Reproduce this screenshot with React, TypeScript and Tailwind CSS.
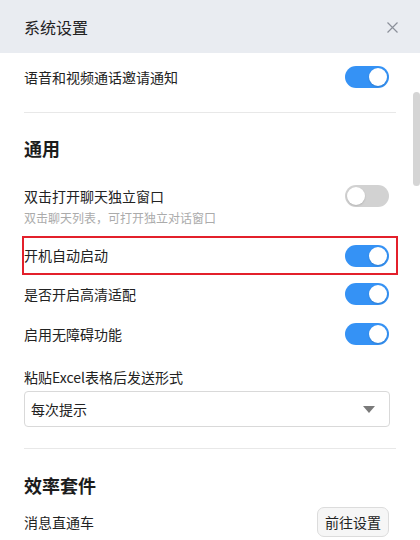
import React from "react";

const font = { fontFamily: '"Noto Sans CJK SC", "Noto Sans", sans-serif' };

function Toggle({ on }: { on: boolean }) {
  return (
    <div
      className={
        "relative h-[22px] w-[44px] shrink-0 rounded-full " +
        (on ? "bg-[#3592f5]" : "bg-[#d2d2d2]")
      }
    >
      <div
        className={
          "absolute top-[2px] h-[18px] w-[18px] rounded-full bg-white shadow-[0_1px_2px_rgba(0,0,0,0.15)] " +
          (on ? "right-[2px]" : "left-[2px]")
        }
      />
    </div>
  );
}

function Row({ label, on, className = "" }: { label: string; on: boolean; className?: string }) {
  return (
    <div className={"flex items-center justify-between pr-[7px] " + className}>
      <span className="text-[14px] text-[#222]">{label}</span>
      <Toggle on={on} />
    </div>
  );
}

export default function App() {
  return (
    <div className="relative h-[540px] w-[420px] overflow-hidden bg-white" style={font}>
      <div className="flex h-[53px] items-center justify-between bg-[#e9ecf1] pl-6 pr-[22px]">
        <span className="text-[16px] text-[#222]">系统设置</span>
        <svg width="11" height="11" viewBox="0 0 11 11" className="mt-[1px]">
          <path d="M0.5 0.5 L10.5 10.5 M10.5 0.5 L0.5 10.5" stroke="#8b909a" strokeWidth="1.2" />
        </svg>
      </div>

      <div className="px-6">
        <Row label="语音和视频通话邀请通知" on className="mt-[4px] h-[40px]" />
        <div className="mt-[15px] h-px bg-[#e8e8e8]" />

        <div className="mt-[23px] flex h-[24px] items-center text-[18px] font-bold text-[#1c1c1c]">通用</div>

        <Row label="双击打开聊天独立窗口" on={false} className="mt-[24px] h-[24px]" />
        <div className="flex h-[20px] items-center text-[12px] text-[#ababab]">双击聊天列表，可打开独立对话窗口</div>

        <div className="-mx-[2px] mt-[8px] flex h-[39px] items-center justify-between border-2 border-[#e3202b] pl-0 pr-[7px]">
          <span className="text-[14px] text-[#222]">开机自动启动</span>
          <Toggle on />
        </div>

        <Row label="是否开启高清适配" on className="h-[38px]" />
        <Row label="启用无障碍功能" on className="h-[42px]" />

        <div className="mt-[12px] flex h-[20px] items-center text-[14px] text-[#222]">粘贴Excel表格后发送形式</div>
        <div className="mr-[6px] mt-[4px] flex h-[36px] items-center justify-between rounded-[4px] border border-[#d9d9d9] pl-[6px] pr-[14px]">
          <span className="text-[14px] text-[#222]">每次提示</span>
          <svg width="12" height="7" viewBox="0 0 12 7">
            <path d="M0 0 H12 L6 7 Z" fill="#7a7a7a" />
          </svg>
        </div>

        <div className="mt-[21px] h-px bg-[#e8e8e8]" />

        <div className="mt-[24px] flex h-[24px] items-center text-[18px] font-bold text-[#1c1c1c]">效率套件</div>

        <div className="mt-[10px] flex h-[30px] items-center justify-between pr-[7px]">
          <span className="text-[14px] text-[#222]">消息直通车</span>
          <button className="flex h-[30px] w-[72px] items-center justify-center rounded-[7px] border border-[#dcdcdc] bg-[#f6f6f6] text-[14px] text-[#222]">
            前往设置
          </button>
        </div>
      </div>

      <div className="absolute right-0 top-[92px] h-[94px] w-[7px] rounded-full bg-[#d5d5d5]" />
    </div>
  );
}
